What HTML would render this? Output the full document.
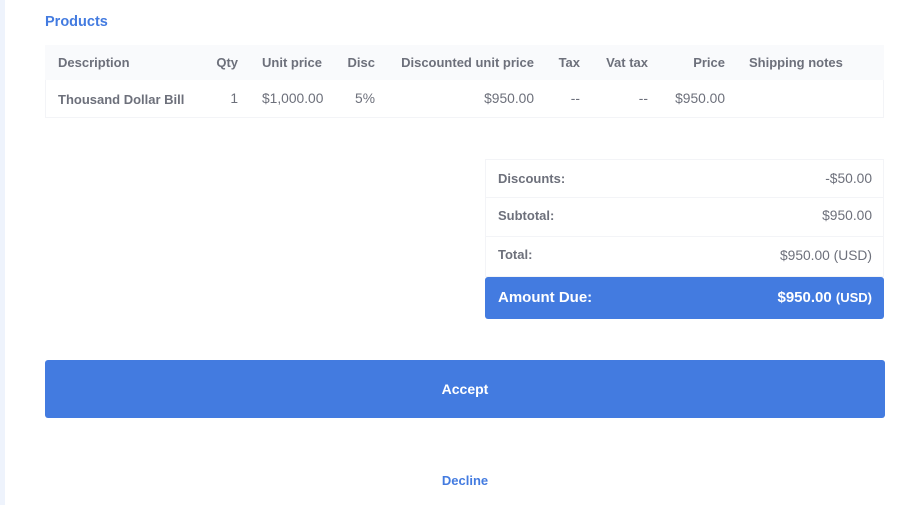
<!DOCTYPE html>
<html><head><style>
*{margin:0;padding:0;box-sizing:border-box}
body{width:924px;height:505px;background:#fff;font-family:"Liberation Sans",sans-serif;position:relative;overflow:hidden;color:#6d707b}
.strip{position:absolute;left:0;top:0;width:5px;height:505px;background:#eef3fc}
.a{position:absolute;white-space:nowrap;font-size:13px}
.n{font-size:13.8px}
.r{text-align:right}
.b{font-weight:bold}
</style></head><body>
<div class="strip"></div>
<div class="a b" style="left:45px;top:14px;font-size:14.5px;color:#437be0">Products</div>
<div style="position:absolute;left:45px;top:45px;width:839px;height:35px;background:#f9fafc"></div>
<div style="position:absolute;left:45px;top:80px;width:839px;height:38px;border:1px solid #f3f4f7;border-top:none"></div>
<div class="a b" style="left:58px;top:55px">Description</div>
<div class="a b r" style="right:686px;top:55px">Qty</div>
<div class="a b" style="left:262px;top:55px">Unit price</div>
<div class="a b r" style="right:549px;top:55px">Disc</div>
<div class="a b r" style="right:390px;top:55px">Discounted unit price</div>
<div class="a b r" style="right:344px;top:55px">Tax</div>
<div class="a b r" style="right:276px;top:55px">Vat tax</div>
<div class="a b r" style="right:199px;top:55px">Price</div>
<div class="a b" style="left:749px;top:55px">Shipping notes</div>
<div class="a b" style="left:58px;top:92px">Thousand Dollar Bill</div>
<div class="a n r" style="right:686px;top:91px">1</div>
<div class="a n" style="left:262px;top:91px">$1,000.00</div>
<div class="a n r" style="right:549px;top:91px">5%</div>
<div class="a n r" style="right:390px;top:91px">$950.00</div>
<div class="a n r" style="right:344px;top:91px">--</div>
<div class="a n r" style="right:276px;top:91px">--</div>
<div class="a n r" style="right:199px;top:91px">$950.00</div>
<div style="position:absolute;left:485px;top:159px;width:399px;height:118px;border:1px solid #f3f4f7"></div>
<div style="position:absolute;left:485px;top:197px;width:399px;height:1px;background:#f3f4f7"></div>
<div style="position:absolute;left:485px;top:236px;width:399px;height:1px;background:#f3f4f7"></div>
<div class="a b" style="left:498px;top:171px">Discounts:</div>
<div class="a n r" style="right:52px;top:171px">-$50.00</div>
<div class="a b" style="left:498px;top:208px">Subtotal:</div>
<div class="a n r" style="right:52px;top:208px">$950.00</div>
<div class="a b" style="left:498px;top:247px">Total:</div>
<div class="a n r" style="right:52px;top:248px">$950.00 (USD)</div>
<div style="position:absolute;left:485px;top:277px;width:399px;height:42px;background:#437be0;border-radius:3px"></div>
<div class="a b" style="left:498px;top:289px;color:#fff;font-size:15px">Amount Due:</div>
<div class="a b r" style="right:52px;top:289px;color:#fff;font-size:15px">$950.00 <span style="font-size:13px">(USD)</span></div>
<div style="position:absolute;left:45px;top:360px;width:840px;height:58px;background:#437be0;border-radius:3px;color:#fff;font-weight:bold;font-size:14px;text-align:center;line-height:58px">Accept</div>
<div class="a b" style="left:0;width:930px;text-align:center;top:473px;color:#437be0">Decline</div>
</body></html>
